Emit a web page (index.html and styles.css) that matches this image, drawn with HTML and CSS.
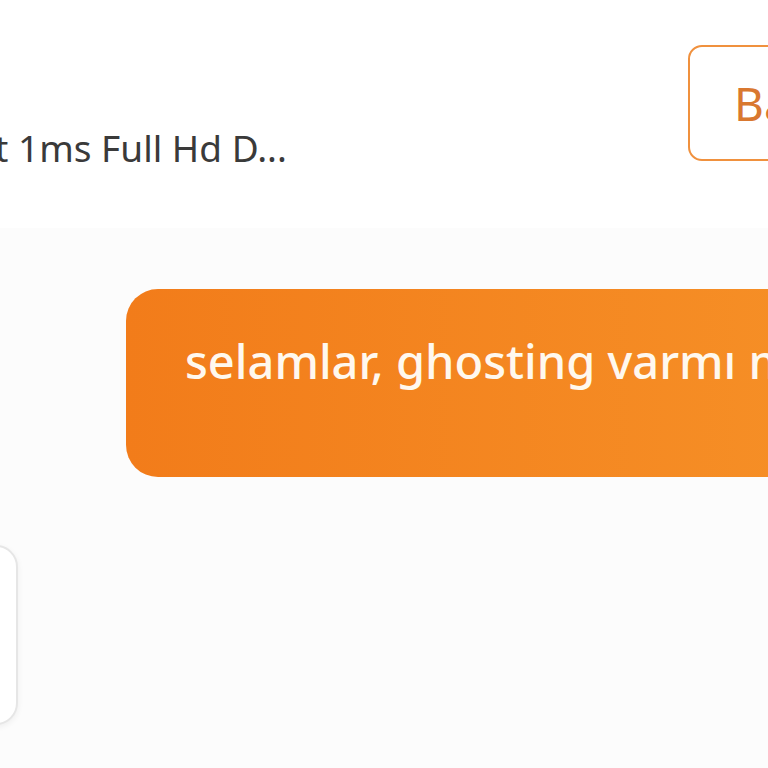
FILE: index.html
```html
<!DOCTYPE html>
<html lang="tr">
<head>
<meta charset="utf-8">
<link rel="stylesheet" href="styles.css">
</head>
<body>
<div class="page">
  <header class="header">
    <div class="title">t 1ms Full Hd D...</div>
    <button class="btn">Başlat</button>
  </header>
  <main class="chat">
    <div class="row-out">
      <div class="bubble">selamlar, ghosting varmı monitörde acaba?</div>
    </div>
    <div class="row-in">
      <div class="card"></div>
    </div>
  </main>
</div>
</body>
</html>
```
FILE: styles.css
```css
html, body {
  margin: 0;
  padding: 0;
  width: 768px;
  height: 768px;
  overflow: hidden;
  background: #fcfcfc;
}
.page {
  width: 768px;
  height: 768px;
  display: flex;
  flex-direction: column;
  overflow: hidden;
  font-family: "Noto Sans", "DejaVu Sans", sans-serif;
}
.header {
  height: 228px;
  flex: none;
  background: #ffffff;
  display: flex;
  align-items: flex-start;
  justify-content: space-between;
  overflow: hidden;
}
.title {
  margin: 126px 0 0 -5px;
  font-size: 37px;
  line-height: 44px;
  color: #3a3a3a;
  white-space: nowrap;
}
.btn {
  margin: 45px -140px 0 0;
  width: 220px;
  height: 116px;
  border: 2px solid #f0913e;
  border-radius: 14px;
  background: #fff;
  color: #d9782f;
  font-family: inherit;
  font-size: 46px;
  text-align: left;
  padding: 0 0 0 44px;
  white-space: nowrap;
}
.chat {
  flex: 1;
  display: flex;
  flex-direction: column;
  gap: 68px;
  padding-top: 61px;
  overflow: hidden;
}
.row-out {
  display: flex;
  padding-left: 126px;
}
.bubble {
  width: 900px;
  flex: none;
  height: 188px;
  box-sizing: border-box;
  border-radius: 32px;
  background: linear-gradient(90deg, #f27c1a 0%, #f7952a 100%);
  color: #fff8ee;
  font-size: 47px;
  font-weight: 500;
  line-height: 60px;
  padding: 42px 0 0 59px;
  white-space: nowrap;
  overflow: hidden;
}
.row-in {
  display: flex;
}
.card {
  margin-left: -200px;
  width: 214px;
  height: 176px;
  flex: none;
  background: #fff;
  border: 2px solid #e6e6e6;
  border-radius: 22px;
  box-shadow: 0 2px 6px rgba(0,0,0,0.06);
}
```
